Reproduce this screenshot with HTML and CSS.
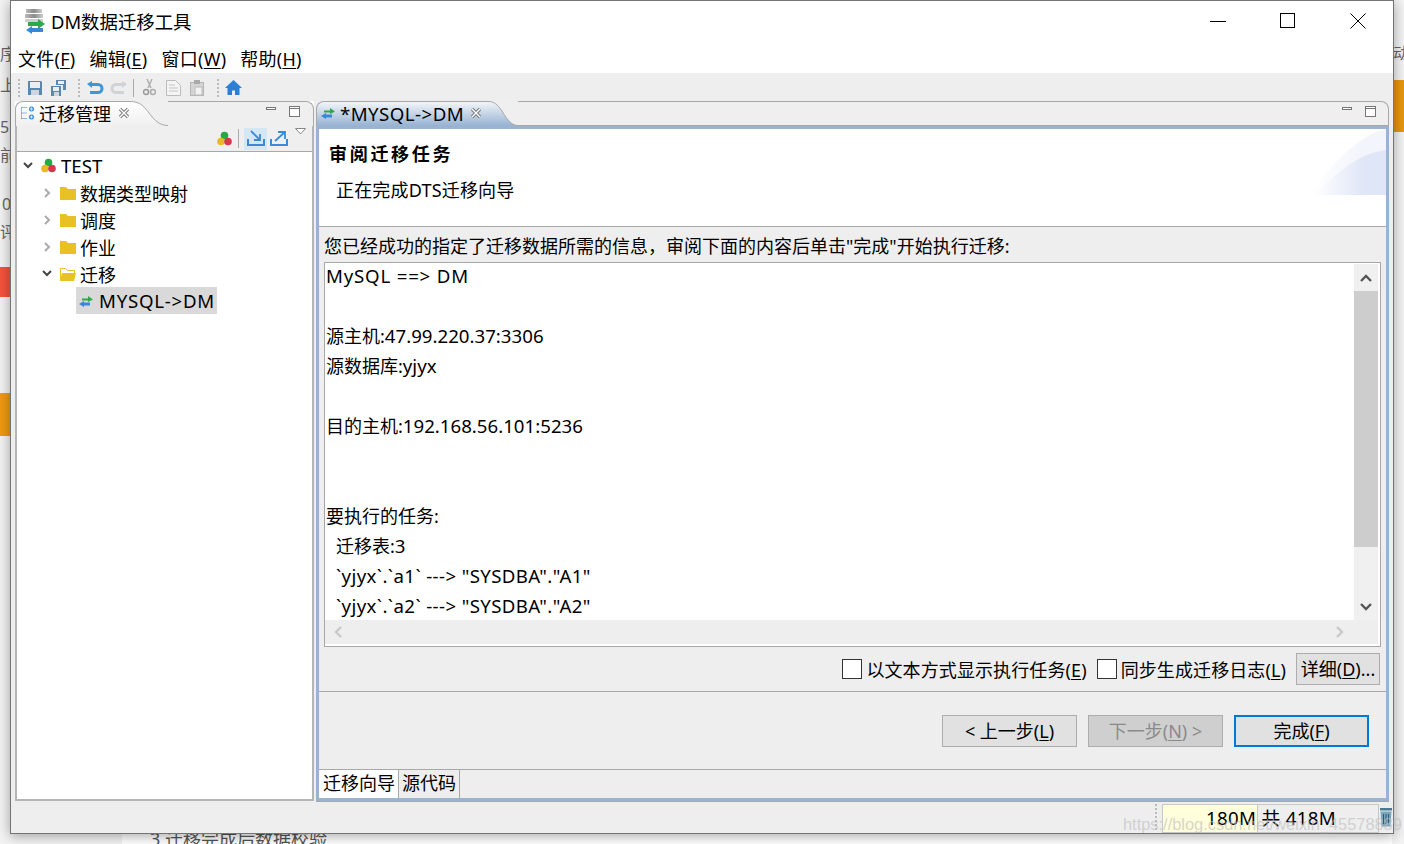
FILE: index.html
```html
<!DOCTYPE html>
<html lang="zh-CN">
<head>
<meta charset="utf-8">
<title>DM数据迁移工具</title>
<link rel="stylesheet" href="styles.css">
</head>
<body>
<div class="desktop">
  <div class="bg-text bt1">序</div><div class="bg-text bt2">上</div><div class="bg-text bt3">53</div><div class="bg-text bt4">前</div><div class="bg-text bt5">0</div><div class="bg-text bt6">评</div><div class="bg-text bt7">动</div>
  <div class="bg-red"></div><div class="bg-orange"></div><div class="bg-orange2"></div><div class="bg-page"></div>
  <div class="bg-text bt8">3 迁移完成后数据校验</div>

  <div class="window">
    <header class="titlebar">
      <svg class="appicon" width="22" height="26" viewBox="0 0 22 26"><defs><linearGradient id="ag" x1="0" y1="0" x2="1" y2="0"><stop offset="0" stop-color="#bbb"/><stop offset=".5" stop-color="#8a8a8a"/><stop offset="1" stop-color="#ccc"/></linearGradient></defs><rect x="2" y="0" width="16" height="4" fill="url(#ag)"/><rect x="1" y="5" width="18" height="4" fill="url(#ag)"/><rect x="1" y="10" width="18" height="3" fill="#cfcfcf"/><path d="M4 13h10v-3l7 5-7 5v-3H4z" fill="#2fa84a"/><path d="M19 19H8v-2l-6 4 6 4v-2h11z" fill="#3a86d8"/></svg>
      <span class="apptitle">DM数据迁移工具</span>
      <div class="winctl">
        <svg width="16" height="16" viewBox="0 0 16 16"><path d="M0 8.500h16" stroke="#000" fill="none"/></svg>
        <svg width="16" height="16" viewBox="0 0 16 16"><rect x=".5" y=".5" width="14" height="14" stroke="#000" fill="none"/></svg>
        <svg width="16" height="16" viewBox="0 0 16 16"><path d="M.5.500l15 15M15.500.500l-15 15" stroke="#000" fill="none"/></svg>
      </div>
    </header>
    <nav class="menubar">
      <span class="mi">文件(<u>F</u>)</span><span class="mi">编辑(<u>E</u>)</span><span class="mi">窗口(<u>W</u>)</span><span class="mi">帮助(<u>H</u>)</span>
    </nav>
    <div class="toolbar">
      <i class="grip"></i>
      <svg class="ti" width="16" height="16" viewBox="0 0 16 16"><path d="M1 1h13l1 1v13H1z" fill="#5b86ad"/><rect x="3" y="2" width="10" height="6" fill="#e8eef4"/><rect x="4" y="10" width="8" height="5" fill="#cfd6dc"/></svg>
      <svg class="ti ti2" width="16" height="16" viewBox="0 0 16 16"><path d="M6 0h10v10h-3V5H6z" fill="#5b86ad"/><rect x="8" y="1" width="6" height="3" fill="#e8eef4"/><path d="M1 6h10v10H1z" fill="#5b86ad"/><rect x="3" y="7" width="6" height="4" fill="#e8eef4"/><rect x="4" y="12" width="5" height="4" fill="#cfd6dc"/></svg>
      <i class="grip g2"></i>
      <svg class="ti" width="17" height="16" viewBox="0 0 17 16"><path d="M5 1v2h6a5 5 0 0 1 0 11H3v-3h8a2 2 0 0 0 0-5H5v2L0 4z" fill="#3a97dc"/></svg>
      <svg class="ti ti3" width="17" height="16" viewBox="0 0 17 16"><path d="M12 1v2H6a5 5 0 0 0 0 11h8v-3H6a2 2 0 0 1 0-5h6v2l5-4z" fill="#d0d3d6"/></svg>
      <i class="vsep"></i>
      <svg class="ti" width="13" height="17" viewBox="0 0 13 17"><path d="M9 0L5 9M4 0l4 9" stroke="#b0b0b0" stroke-width="1.500"/><circle cx="3" cy="13" r="2.500" fill="none" stroke="#999" stroke-width="1.500"/><circle cx="10" cy="13" r="2.500" fill="none" stroke="#aaa" stroke-width="1.500"/></svg>
      <svg class="ti ti4" width="15" height="16" viewBox="0 0 15 16"><path d="M.5.500h9l5 5v10H.500z" fill="#f4f4f4" stroke="#bbb"/><path d="M3 5h6M3 8h9M3 11h9" stroke="#c4c4c4"/></svg>
      <svg class="ti ti5" width="14" height="16" viewBox="0 0 14 16"><rect x=".5" y="2.500" width="13" height="13" fill="#d4d4d4" stroke="#b5b5b5"/><rect x="4" y="0" width="6" height="4" fill="#aaa"/><rect x="5" y="7" width="7" height="8" fill="#f2f2f2" stroke="#bbb"/></svg>
      <i class="grip g3"></i>
      <svg class="ti ti6" width="17" height="15" viewBox="0 0 17 15"><path d="M8.500 0L17 8h-2.500v7H10v-4.500H7V15H2.500V8H0z" fill="#2b7fd6"/></svg>
    </div>

    <main class="workspace">
      <section class="leftpane">
        <div class="lhead">
          <div class="ltab">
            <svg width="16" height="14" viewBox="0 0 16 14"><path d="M1.500 1.500h6M1.500 1.500v11M1.500 7h6M1.500 12.500h6" stroke="#3a7bc4" stroke-dasharray="1 1" fill="none"/><circle cx="11.500" cy="3" r="2.500" fill="#3a8ad8"/><circle cx="11.500" cy="11" r="2.500" fill="#3a8ad8"/><path d="M10 3h3M11.500 1.500v3M10 11h3M11.500 9.500v3" stroke="#dbeaf8"/></svg>
            <span class="ltab-title">迁移管理</span>
            <svg class="x" width="12" height="12" viewBox="0 0 12 12"><path d="M2 2l8 8M10 2l-8 8" stroke="#777" stroke-width="3.200"/><path d="M2 2l8 8M10 2l-8 8" stroke="#fff" stroke-width="1.400"/></svg>
          </div>
          <svg class="lcurve" width="38" height="25" viewBox="0 0 38 25"><defs><linearGradient id="lg" x1="0" y1="0" x2="0" y2="1"><stop offset="0" stop-color="#fff"/><stop offset="1" stop-color="#efefef"/></linearGradient></defs><path d="M0 .5C9 .5 13 4 19 12C25 20 30 24.500 38 24.500V25H0z" fill="url(#lg)"/><path d="M0 .5C9 .5 13 4 19 12C25 20 30 24.500 38 24.500" fill="none" stroke="#a8a8a8"/></svg>
          <div class="lrest">
            <svg width="12" height="8" viewBox="0 0 12 8"><rect x=".5" y="1.500" width="9" height="2" fill="#fff" stroke="#777"/></svg>
            <svg width="12" height="12" viewBox="0 0 12 12"><rect x=".5" y=".5" width="10" height="10" fill="#fff" stroke="#777"/><path d="M0 2.500h10" stroke="#777"/></svg>
          </div>
        </div>
        <div class="lbar">
          <svg width="15" height="15" viewBox="0 0 15 15"><circle cx="7.500" cy="4.500" r="3.800" fill="#28a745"/><circle cx="4" cy="10.500" r="3.800" fill="#e8b923"/><circle cx="11" cy="10.500" r="3.800" fill="#d9364a"/></svg>
          <i class="lsep"></i>
          <span class="tbtn on"><svg width="18" height="17" viewBox="0 0 18 17"><path d="M1 9v6h16V9" fill="none" stroke="#3a8ad8" stroke-width="2"/><path d="M4 1l9 9M13 4v6H7" fill="none" stroke="#3a8ad8" stroke-width="1.800"/></svg></span>
          <span class="tbtn"><svg width="18" height="17" viewBox="0 0 18 17"><path d="M1 9v6h16V9" fill="none" stroke="#3a8ad8" stroke-width="2"/><path d="M5 11l10-9M8 2h7v7" fill="none" stroke="#3a8ad8" stroke-width="1.800"/></svg></span>
          <svg class="tri" width="11" height="7" viewBox="0 0 11 7"><path d="M.5.500h10l-5 5.500z" fill="#fff" stroke="#888"/></svg>
        </div>
        <ul class="tree">
          <li class="node n0"><svg class="tw" width="10" height="7" viewBox="0 0 10 7"><path d="M1 1l4 4 4-4" fill="none" stroke="#444" stroke-width="2"/></svg><svg class="nico" width="15" height="15" viewBox="0 0 15 15"><circle cx="7.500" cy="4.500" r="3.800" fill="#28a745"/><circle cx="4" cy="10.500" r="3.800" fill="#e8b923"/><circle cx="11" cy="10.500" r="3.800" fill="#d9364a"/></svg><span class="n0t">TEST</span></li>
          <li class="node n1"><svg class="tw" width="10" height="10" viewBox="0 0 10 10"><path d="M3 1l4 4-4 4" fill="none" stroke="#aaa" stroke-width="2"/></svg><svg class="nico" width="16" height="14" viewBox="0 0 16 14"><path d="M0 1h6l2 2h8v11H0z" fill="#e8c125"/></svg><span>数据类型映射</span></li>
          <li class="node n1"><svg class="tw" width="10" height="10" viewBox="0 0 10 10"><path d="M3 1l4 4-4 4" fill="none" stroke="#aaa" stroke-width="2"/></svg><svg class="nico" width="16" height="14" viewBox="0 0 16 14"><path d="M0 1h6l2 2h8v11H0z" fill="#e8c125"/></svg><span>调度</span></li>
          <li class="node n1"><svg class="tw" width="10" height="10" viewBox="0 0 10 10"><path d="M3 1l4 4-4 4" fill="none" stroke="#aaa" stroke-width="2"/></svg><svg class="nico" width="16" height="14" viewBox="0 0 16 14"><path d="M0 1h6l2 2h8v11H0z" fill="#e8c125"/></svg><span>作业</span></li>
          <li class="node n1"><svg class="tw" width="10" height="7" viewBox="0 0 10 7"><path d="M1 1l4 4 4-4" fill="none" stroke="#444" stroke-width="2"/></svg><svg class="nico" width="16" height="14" viewBox="0 0 16 14"><path d="M.5 13V1.500h5l2 2h7V6" fill="#fff" stroke="#e8c125"/><path d="M0 14l2-8h14l-2 8z" fill="#e8c125"/></svg><span>迁移</span></li>
          <li class="node n2"><span class="sel"><svg width="16" height="12" viewBox="0 0 16 12"><path d="M4 3.500h6V1l5 3.500-5 2.500V5.500H4z" fill="#2fa84a"/><path d="M12 7.500H6V6l-5 3 5 3v-1.500h6z" fill="#3a86d8"/></svg><span class="seltext">MYSQL-&gt;DM</span></span></li>
        </ul>
      </section>

      <section class="rightpane">
        <div class="rhead">
          <div class="etab">
            <svg width="16" height="12" viewBox="0 0 16 12"><path d="M4 3.500h6V1l5 3.500-5 2.500V5.500H4z" fill="#2fa84a"/><path d="M12 7.500H6V6l-5 3 5 3v-1.500h6z" fill="#3a86d8"/></svg>
            <span class="etab-title">*MYSQL-&gt;DM</span>
            <svg class="x" width="12" height="12" viewBox="0 0 12 12"><path d="M2 2l8 8M10 2l-8 8" stroke="#777" stroke-width="3.200"/><path d="M2 2l8 8M10 2l-8 8" stroke="#fff" stroke-width="1.400"/></svg>
          </div>
          <svg class="ecurve" width="30" height="25" viewBox="0 0 30 25"><defs><linearGradient id="eg" x1="0" y1="0" x2="0" y2="1"><stop offset="0" stop-color="#f2f5f9"/><stop offset="1" stop-color="#97b2d2"/></linearGradient></defs><path d="M0 .5C6 .5 9 3 14 10C20 20 24 24.500 30 24.500V25H0z" fill="url(#eg)"/><path d="M0 .5C6 .5 9 3 14 10C20 20 24 24.500 30 24.500" fill="none" stroke="#a8a8a8"/></svg>
          <div class="rrest">
            <svg width="12" height="8" viewBox="0 0 12 8"><rect x=".5" y="1.500" width="9" height="2" fill="#fff" stroke="#777"/></svg>
            <svg width="12" height="12" viewBox="0 0 12 12"><rect x=".5" y=".5" width="10" height="10" fill="#fff" stroke="#777"/><path d="M0 2.500h10" stroke="#777"/></svg>
          </div>
        </div>
        <div class="frame">
          <div class="wizhead">
            <h1 class="wiztitle">审阅迁移任务</h1>
            <p class="wizsub">正在完成DTS迁移向导</p>
            <svg class="wizart" width="78" height="66" viewBox="0 0 78 66"><defs><linearGradient id="wa" x1="0" y1="0" x2="1" y2="0"><stop offset="0" stop-color="#fff"/><stop offset=".7" stop-color="#dfe6f7"/></linearGradient></defs><path d="M0 66C20 45 40 10 78 0V66z" fill="url(#wa)" opacity=".4"/><path d="M5 66C25 50 45 25 78 21V66z" fill="url(#wa)"/></svg>
          </div>
          <div class="wizbody">
            <p class="desc">您已经成功的指定了迁移数据所需的信息，审阅下面的内容后单击"完成"开始执行迁移:</p>
            <div class="textbox">
              <div class="lines">
                <div class="ln wide">MySQL ==&gt; DM</div>
                <div class="ln">&nbsp;</div>
                <div class="ln">源主机:<span class="lat">47.99.220.37:3306</span></div>
                <div class="ln">源数据库:<span class="lat">yjyx</span></div>
                <div class="ln">&nbsp;</div>
                <div class="ln">目的主机:<span class="lat">192.168.56.101:5236</span></div>
                <div class="ln">&nbsp;</div>
                <div class="ln">&nbsp;</div>
                <div class="ln">要执行的任务:</div>
                <div class="ln ind">迁移表:<span class="lat">3</span></div>
                <div class="ln ind task">`yjyx`.`a1` ---&gt; "SYSDBA"."A1"</div>
                <div class="ln ind task">`yjyx`.`a2` ---&gt; "SYSDBA"."A2"</div>
              </div>
              <div class="vscroll">
                <svg width="14" height="10" viewBox="0 0 14 10"><path d="M2 8l5-5 5 5" fill="none" stroke="#555" stroke-width="2.400"/></svg>
                <div class="thumbtrack"><div class="thumb"></div></div>
                <svg width="14" height="10" viewBox="0 0 14 10"><path d="M2 2l5 5 5-5" fill="none" stroke="#555" stroke-width="2.400"/></svg>
              </div>
              <div class="hscroll">
                <svg width="10" height="14" viewBox="0 0 10 14"><path d="M8 2L3 7l5 5" fill="none" stroke="#c8c8c8" stroke-width="2.400"/></svg>
                <svg width="10" height="14" viewBox="0 0 10 14"><path d="M2 2l5 5-5 5" fill="none" stroke="#c8c8c8" stroke-width="2.400"/></svg>
              </div>
            </div>
            <div class="opts">
              <label class="chk"><i class="box"></i><span>以文本方式显示执行任务(<u>E</u>)</span></label>
              <label class="chk"><i class="box"></i><span>同步生成迁移日志(<u>L</u>)</span></label>
              <button class="btn detail">详细(<u>D</u>)...</button>
            </div>
          </div>
          <div class="navrow">
            <button class="btn nav">&lt; 上一步(<u>L</u>)</button>
            <button class="btn nav dis">下一步(<u>N</u>) &gt;</button>
            <button class="btn nav def">完成(<u>F</u>)</button>
          </div>
          <div class="pagetabs">
            <span class="ptab act">迁移向导</span><span class="ptab">源代码</span>
          </div>
        </div>
      </section>
    </main>

    <footer class="statusbar">
      <i class="sgrip"></i>
      <div class="heap"><div class="heapfill"></div><span class="heaptext">180M 共 418M</span></div>
      <svg class="trash" width="14" height="19" viewBox="0 0 14 19"><rect x="1" y="0" width="12" height="2.500" fill="#4a7a94"/><path d="M1.500 3.500h11l-1 15h-9z" fill="#7aa6bd"/><path d="M4.500 6v10M7 6v10M9.500 6v10" stroke="#2f5a72"/></svg>
    </footer>
  </div>
  <div class="watermark">https://blog.csdn.net/weixin_45578889</div>
</div>
</body>
</html>
```

FILE: styles.css
```css
* { box-sizing: border-box; }
html, body { margin: 0; padding: 0; }
body { font-family: "Noto Sans", "Noto Sans CJK SC", sans-serif; font-size: 18px; color: #000; }
u { text-underline-offset: 2px; }
h1, p, ul { margin: 0; padding: 0; }
i { display: block; }
button { font: inherit; color: inherit; }

.desktop { position: relative; width: 1404px; height: 844px; overflow: hidden; background: #f3f3f3; }
.bg-text { position: absolute; color: #666; font-size: 16px; line-height: 20px; }
.bt1 { left: 0; top: 44px; }
.bt2 { left: 0; top: 75px; }
.bt3 { left: 0; top: 117px; }
.bt4 { left: 0; top: 145px; }
.bt5 { left: 2px; top: 194px; }
.bt6 { left: 0; top: 222px; }
.bt7 { left: 1393px; top: 43px; }
.bt8 { left: 150px; top: 829px; font-size: 18px; color: #555; }
.bg-red { position: absolute; left: 0; top: 267px; width: 10px; height: 30px; background: #f4533c; }
.bg-orange { position: absolute; left: 0; top: 393px; width: 10px; height: 43px; background: #ef9a10; }
.bg-orange2 { position: absolute; left: 1394px; top: 80px; width: 10px; height: 52px; background: #e8960e; }
.bg-page { position: absolute; left: 122px; top: 834px; width: 1270px; height: 10px; background: #fff; }

.window { position: absolute; left: 10px; top: 0; width: 1384px; height: 834px; display: flex; flex-direction: column; background: #eee; border: 1px solid #747474; box-shadow: 0 2px 12px rgba(0,0,0,.35); }

.titlebar { height: 40px; flex: none; display: flex; align-items: center; background: #fff; padding-left: 13px; }
.appicon { margin-right: 5px; margin-top: 2px; }
.apptitle { font-size: 18.4px; }
.winctl { margin-left: auto; display: flex; gap: 54px; padding-right: 27px; }

.menubar { height: 32px; flex: none; display: flex; align-items: center; background: #fff; padding: 2px 0 0 7px; }
.mi { white-space: nowrap; margin-right: 14px; letter-spacing: .25px; }

.toolbar { height: 28px; flex: none; display: flex; align-items: center; padding: 1px 0 0 7px; background: #eee; }
.grip { width: 2px; height: 18px; background: repeating-linear-gradient(#bbb 0 2px, transparent 2px 4px); }
.ti { margin-left: 7px; flex: none; }
.ti2 { margin-left: 7px; }
.g2 { margin-left: 12px; }
.ti3 { margin-left: 6px; }
.vsep { width: 1px; height: 18px; background: #aaa; margin-left: 6px; margin-right: 2px; }
.ti4 { margin-left: 10px; }
.ti5 { margin-left: 9px; }
.g3 { margin-left: 13px; }
.ti6 { margin-left: 6px; }

.workspace { flex: 1; min-height: 0; display: flex; gap: 2px; padding: 0 4px 0 4px; }

.leftpane { width: 299px; flex: none; display: flex; flex-direction: column; background: #fff; border-left: 2px solid #b5b5b5; border-bottom: 2px solid #b5b5b5; border-right: 2px solid #b5b5b5; border-radius: 8px 8px 0 0; }
.lhead { height: 25px; flex: none; display: flex; background: #fff; margin-left: -2px; margin-right: -2px; }
.ltab { display: flex; align-items: center; gap: 3px; padding: 0 0 2px 4px; background: linear-gradient(#fff, #efefef); border-top: 1px solid #a8a8a8; border-left: 1px solid #a8a8a8; border-radius: 8px 0 0 0; width: 116px; flex: none; }
.ltab-title { white-space: nowrap; }
.x { flex: none; margin-left: 2px; }
.ltab .x { margin-left: 4px; }
.lcurve { flex: none; margin-left: -1px; background: #efefef; }
.lrest, .rrest { flex: 1; display: flex; justify-content: flex-end; align-items: flex-start; gap: 11px; padding: 4px 12px 0 0; background: #efefef; border-top: 1px solid #a8a8a8; border-bottom: 1px solid #a8a8a8; border-right: 1px solid #a8a8a8; border-radius: 0 8px 0 0; }
.lrest { border-bottom: 0; }
.rrest { padding-right: 11px; }
.lbar { height: 26px; flex: none; display: flex; align-items: center; justify-content: flex-end; background: #efefef; border-bottom: 1px solid #a8a8a8; padding-right: 6px; }
.lsep { width: 1px; height: 19px; background: #aaa; margin: 0 5px 0 6px; }
.tbtn { width: 23px; height: 22px; display: flex; align-items: center; justify-content: center; }
.tbtn.on { background: #d5e6f5; }
.tri { margin: -14px 0 0 5px; }
.tree { list-style: none; flex: 1; background: #fff; }
.node { height: 27px; display: flex; align-items: center; white-space: nowrap; }
.tw { flex: none; width: 10px; }
.n0 { padding-left: 6px; }
.n0 .nico { margin-left: 8px; }
.n0t { margin-left: 5px; font-size: 18.67px; }
.n1 { padding-left: 25px; }
.n1 .nico { margin-left: 8px; }
.n1 span { margin-left: 4px; }
.n2 { padding-left: 59px; }
.sel { display: flex; align-items: center; gap: 5px; height: 27px; padding: 0 2px; background: #d9d9d9; }
.seltext { font-size: 18.67px; letter-spacing: .75px; }

.rightpane { width: 1073px; flex: none; display: flex; flex-direction: column; }
.rhead { height: 25px; flex: none; display: flex; }
.etab { display: flex; align-items: center; gap: 4px; padding: 0 0 2px 3px; width: 172px; flex: none; background: linear-gradient(#f2f5f9, #97b2d2); border-top: 1px solid #a8a8a8; border-left: 1px solid #a8a8a8; border-radius: 8px 0 0 0; }
.etab-title { white-space: nowrap; font-size: 18.67px; letter-spacing: .45px; }
.ecurve { flex: none; background: #efefef; }
.frame { flex: 1; min-height: 0; display: flex; flex-direction: column; border: 3px solid #99b4d1; box-shadow: 0 1px 0 #a8a8a8; background: #eee; }
.wizhead { position: relative; height: 98px; flex: none; background: #fff; border-bottom: 1px solid #a8a8a8; padding: 11px 0 0 10px; overflow: hidden; }
.wiztitle { font-size: 18px; font-weight: 700; letter-spacing: 2.7px; line-height: 28px; }
.wizsub { line-height: 28px; margin: 8px 0 0 7px; letter-spacing: .18px; }
.wizart { position: absolute; right: 0; top: 0; }
.wizbody { height: 465px; flex: none; padding: 0 5px 0 5px; border-bottom: 1px solid #a8a8a8; display: flex; flex-direction: column; }
.desc { line-height: 28px; margin-top: 5px; white-space: nowrap; }
.textbox { margin-top: 2px; height: 385px; flex: none; display: grid; grid-template-columns: 1fr 24px; grid-template-rows: 1fr 24px; border: 1px solid #a8a8a8; background: #fff; padding: 1px 2px 2px 0; }
.lines { overflow: hidden; background: #fff; }
.ln { height: 30px; line-height: 30px; padding-left: 1px; white-space: pre; }
.ln:first-child { margin-top: -3px; }
.ind { padding-left: 11px; }
.lat { font-size: 18.67px; }
.wide { font-size: 18.67px; letter-spacing: .8px; }
.task { font-size: 18.67px; letter-spacing: .38px; }
.vscroll { grid-row: 1 / 2; grid-column: 2; display: flex; flex-direction: column; align-items: center; background: #f0f0f0; padding-top: 9px; }
.thumbtrack { flex: 1; width: 100%; margin-top: 8px; }
.thumb { height: 256px; background: #cdcdcd; }
.vscroll svg:last-child { margin-bottom: 8px; }
.hscroll { grid-column: 1 / 3; display: flex; justify-content: space-between; align-items: center; padding: 0 33px 0 8px; background: #eee; }
.opts { flex: 1; display: flex; justify-content: flex-end; align-items: center; }
.chk { display: flex; align-items: center; gap: 4px; white-space: nowrap; margin-right: 10px; letter-spacing: .1px; }
.box { width: 20px; height: 20px; border: 1px solid #333; background: #fff; }
.btn { background: #e1e1e1; border: 1px solid #adadad; padding: 0 0 2px; white-space: nowrap; }
.detail { width: 84px; height: 32px; margin-right: 1px; }
.navrow { height: 78px; flex: none; display: flex; justify-content: flex-end; gap: 11px; padding: 23px 17px 0 0; border-bottom: 1px solid #a8a8a8; }
.nav { width: 135px; height: 32px; }
.dis { background: #cfcfcf; color: #8a8a8a; }
.def { border: 2px solid #0078d7; }
.pagetabs { flex: 1; display: flex; align-items: stretch; }
.ptab { padding: 0 3px; line-height: 27px; border-right: 1px solid #a8a8a8; white-space: nowrap; }
.ptab.act { background: #fff; padding: 0 3px 0 4px; }

.statusbar { height: 32px; flex: none; display: flex; align-items: flex-start; justify-content: flex-end; padding-top: 3px; }
.sgrip { width: 2px; height: 26px; margin-right: 5px; background: repeating-linear-gradient(#bbb 0 2px, transparent 2px 4px); }
.heap { position: relative; width: 217px; height: 29px; border: 1px solid #c8c8c8; background: #eee; }
.heapfill { width: 95px; height: 100%; background: #ffffdc; border-right: 1px solid #c8c8c8; }
.heaptext { position: absolute; right: 42px; top: 0; line-height: 25px; font-size: 18.67px; letter-spacing: .35px; white-space: nowrap; }
.trash { margin: 4px 0 0 0; }
.watermark { position: absolute; left: 1123px; top: 815px; font: 16.4px "Liberation Sans", sans-serif; color: rgba(190,190,190,.65); white-space: nowrap; }
```
